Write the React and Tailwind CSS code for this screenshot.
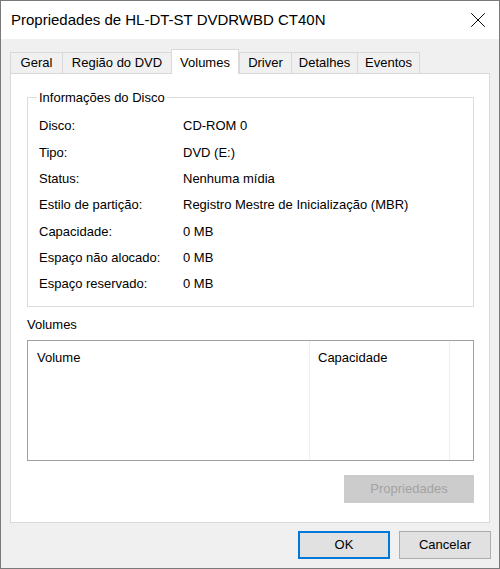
import { X } from "lucide-react";

const TABS = ["Geral", "Região do DVD", "Volumes", "Driver", "Detalhes", "Eventos"];
const TAB_WIDTHS = {
  Geral: "w-[52px]",
  "Região do DVD": "w-[109px]",
  Volumes: "w-[68px]",
  Driver: "w-[52px]",
  Detalhes: "w-[66px]",
  Eventos: "w-[63px]",
};

const INFO = [
  ["Disco:", "CD-ROM 0"],
  ["Tipo:", "DVD (E:)"],
  ["Status:", "Nenhuma mídia"],
  ["Estilo de partição:", "Registro Mestre de Inicialização (MBR)"],
  ["Capacidade:", "0 MB"],
  ["Espaço não alocado:", "0 MB"],
  ["Espaço reservado:", "0 MB"],
];

export default function App() {
  const active = "Volumes";

  return (
    <div className="flex h-[569px] w-[500px] flex-col border border-[#7a7a7a] bg-[#f0f0f0] font-['Liberation_Sans',Arial,sans-serif] text-[13px] text-black">
      {/* Title bar */}
      <div className="flex h-[38px] shrink-0 items-center justify-between bg-white pl-[10px] pr-[8px]">
        <span className="text-[15px] text-black">Propriedades de HL-DT-ST DVDRWBD CT40N</span>
        <X size={26} strokeWidth={0.9} className="text-black" />
      </div>

      {/* Tabs */}
      <div className="flex h-[34px] items-end pl-[9px]">
        {TABS.map((t) =>
          t === active ? (
            <div
              key={t}
              className={`${TAB_WIDTHS[t]} relative z-10 -mb-px flex h-[25px] items-start justify-center border border-b-0 border-[#d9d9d9] bg-white pt-[3px]`}
            >
              {t}
            </div>
          ) : (
            <div
              key={t}
              className={`${TAB_WIDTHS[t]} flex h-[21px] items-center justify-center border border-b-0 border-r-0 border-[#d9d9d9] bg-[#f0f0f0] last:border-r`}
            >
              {t}
            </div>
          )
        )}
      </div>

      {/* Tab pane */}
      <div className="mx-[9px] flex h-[450px] flex-col border border-[#d9d9d9] bg-white pl-[16px] pr-[15px] pt-[16px]">
        <fieldset className="h-[217px] border border-[#dcdcdc] px-[11px] pt-[8px]">
          <legend className="-ml-[2px] px-[2px] leading-[15px]">Informações do Disco</legend>
          {INFO.map(([label, value]) => (
            <div key={label} className="flex h-[26.3px] items-center">
              <span className="w-[144px] shrink-0">{label}</span>
              <span>{value}</span>
            </div>
          ))}
        </fieldset>

        <div className="mt-[10px] h-[16px] leading-[16px]">Volumes</div>

        <div className="mt-[7px] flex h-[121px] border border-[#a0a0a0]">
          <div className="w-[281px] pl-[9px] pt-[7px]">Volume</div>
          <div className="w-[140px] border-l border-[#eaf0f7] pl-[8px] pt-[7px]">Capacidade</div>
          <div className="flex-1 border-l border-[#eaf0f7]" />
        </div>

        <div className="mt-[14px] flex justify-end">
          <div className="flex h-[28px] w-[130px] items-center justify-center bg-[#cccccc] text-[#a3a3a3]">
            Propriedades
          </div>
        </div>
      </div>

      {/* Footer buttons */}
      <div className="flex justify-end gap-[9px] pr-[8px] pt-[8px]">
        <button className="flex h-[28px] w-[92px] items-center justify-center border border-[#0078d7] bg-[#e1e1e1] text-[13px] outline outline-1 -outline-offset-2 outline-[#0078d7]">
          OK
        </button>
        <button className="flex h-[28px] w-[92px] items-center justify-center border border-[#adadad] bg-[#e1e1e1] text-[13px]">
          Cancelar
        </button>
      </div>
    </div>
  );
}
